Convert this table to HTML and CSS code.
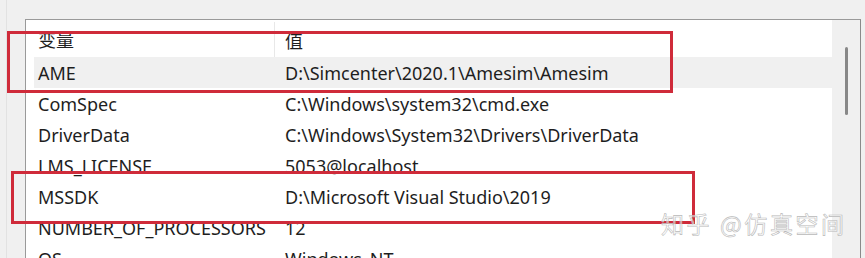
FILE: index.html
```html
<!DOCTYPE html>
<html lang="zh">
<head>
<meta charset="utf-8">
<link rel="stylesheet" href="styles.css">
</head>
<body>
<div class="page">
  <div class="listbox">
    <div class="table">
      <div class="row head"><div class="c1">变量</div><div class="c2">值</div></div>
      <div class="row sel"><div class="c1">AME</div><div class="c2">D:\Simcenter\2020.1\Amesim\Amesim</div></div>
      <div class="row"><div class="c1">ComSpec</div><div class="c2">C:\Windows\system32\cmd.exe</div></div>
      <div class="row"><div class="c1">DriverData</div><div class="c2">C:\Windows\System32\Drivers\DriverData</div></div>
      <div class="row"><div class="c1">LMS_LICENSE</div><div class="c2">5053@localhost</div></div>
      <div class="row"><div class="c1">MSSDK</div><div class="c2">D:\Microsoft Visual Studio\2019</div></div>
      <div class="row"><div class="c1">NUMBER_OF_PROCESSORS</div><div class="c2">12</div></div>
      <div class="row"><div class="c1">OS</div><div class="c2">Windows_NT</div></div>
    </div>
    <div class="scrollbar"><div class="thumb"></div></div>
  </div>
  <div class="mark mark1"></div>
  <div class="mark mark2"></div>
  <div class="watermark">知乎 @仿真空间</div>
</div>
</body>
</html>
```

FILE: styles.css
```css
html, body {
  margin: 0;
  padding: 0;
  background: #f0f0f0;
  overflow: hidden;
}
.page {
  position: relative;
  height: 258px;
  overflow: hidden;
  font-family: "Noto Sans", "Noto Sans CJK SC", sans-serif;
  color: #1e1e1e;
  border-left: 1px solid #e2e2e2;
  margin-left: 6px;
  box-sizing: border-box;
  width: 859px;
}
.listbox {
  display: flex;
  margin-left: 18px;
  margin-top: 19px;
  width: 836px;
  height: 260px;
  border: 1px solid #9a9a9a;
  border-bottom: none;
  border-right-color: #8a8a8a;
  box-sizing: border-box;
  background: #fff;
}
.table {
  flex: 1;
  padding-left: 8px;
}
.row {
  display: grid;
  grid-template-columns: 240px 1fr;
  height: 31px;
  align-items: center;
  font-size: 18px;
  white-space: nowrap;
}
.row .c1 { padding-left: 4px; overflow: hidden; }
.row .c2 { padding-left: 11px; }
.row.head {
  height: 37px;
}
.row.head .c2 {
  border-left: 1px solid #e8e8e8;
  height: 35px;
  display: flex;
  align-items: center;
  margin-top: 2px;
  padding-left: 10px;
}
.row.sel { background: #f0f0f0; }
.scrollbar {
  width: 28px;
  background: #f0f0f0;
  display: flex;
  justify-content: center;
}
.thumb {
  width: 3px;
  height: 68px;
  margin-top: 27px;
  background: #888;
  border-radius: 2px;
}
.mark {
  position: absolute;
  border: 3px solid #cf2b3a;
  box-sizing: border-box;
}
.mark1 { left: 0; top: 31px; width: 666px; height: 62px; }
.mark2 { left: 4px; top: 171px; width: 684px; height: 53px; }
.watermark {
  position: absolute;
  left: 654px;
  top: 206px;
  font-family: "Noto Sans CJK SC", sans-serif;
  font-size: 23px;
  letter-spacing: 2.6px;
  color: rgba(255, 255, 255, 0.55);
  -webkit-text-stroke: 0.6px #b9b9b9;
}
```
